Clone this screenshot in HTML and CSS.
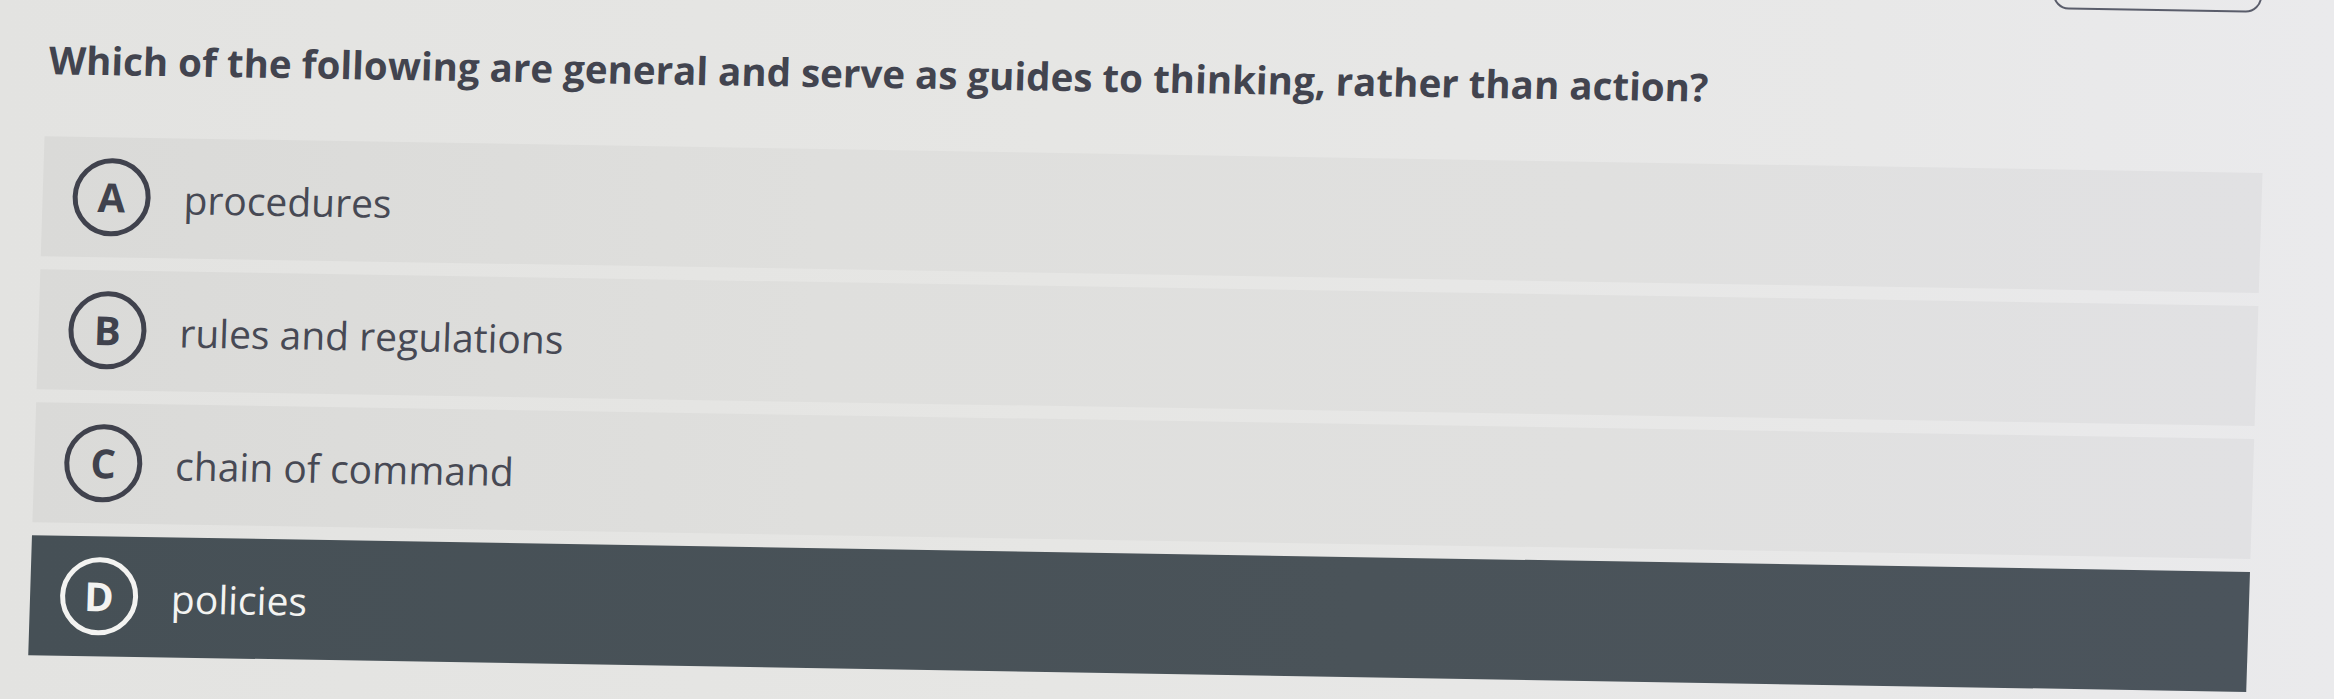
FILE: index.html
```html
<!DOCTYPE html>
<html lang="en">
<head>
<meta charset="utf-8">
<title>Question</title>
<link rel="stylesheet" href="styles.css">
</head>
<body>
<div class="screen">
  <div class="topbar"><div class="top-btn"></div></div>
  <h1 class="question">Which of the following are general and serve as guides to thinking, rather than action?</h1>
  <ul class="options">
    <li class="option"><span class="badge">A</span><span class="label">procedures</span></li>
    <li class="option"><span class="badge">B</span><span class="label">rules and regulations</span></li>
    <li class="option"><span class="badge">C</span><span class="label">chain of command</span></li>
    <li class="option selected"><span class="badge">D</span><span class="label">policies</span></li>
  </ul>
</div>
</body>
</html>
```
FILE: styles.css
```css
html, body {
  margin: 0;
  padding: 0;
  height: 100%;
  overflow: hidden;
}
body {
  background: linear-gradient(90deg, #e3e3e1 0%, #e6e6e4 45%, #e8e8e8 80%, #eaeaec 100%);
}
.screen {
  width: 2334px;
  height: 699px;
  transform-origin: right top;
  transform: skew(-1.8deg, 0.95deg);
  font-family: "Open Sans", "Noto Sans", sans-serif;
  color: #40424d;
}
.topbar {
  height: 14px;
  display: flex;
  justify-content: flex-end;
  align-items: flex-end;
  padding-right: 72px;
}
.top-btn {
  flex: none;
  width: 209px;
  height: 56px;
  box-sizing: border-box;
  border: 2px solid #5a5d6b;
  border-radius: 16px;
}
.question {
  margin: 57px 0 0 52px;
  font-size: 38.5px;
  font-weight: 700;
  line-height: 52px;
  color: #42444f;
}
.options {
  list-style: none;
  margin: 51px 66px 0 50px;
  padding: 0;
  display: flex;
  flex-direction: column;
  gap: 13px;
}
.option {
  height: 120px;
  display: flex;
  align-items: center;
  gap: 33px;
  padding-left: 30px;
  background: linear-gradient(90deg, #dadad8 0%, #dfdfdd 35%, #e0e0df 70%, #e1e1e3 100%);
}
.badge {
  flex: none;
  width: 78px;
  height: 78px;
  box-sizing: border-box;
  border: 5px solid #40424d;
  border-radius: 50%;
  display: flex;
  align-items: center;
  justify-content: center;
  font-size: 40px;
  font-weight: 700;
  line-height: 1;
}
.label {
  font-size: 39px;
  font-weight: 400;
  color: #474954;
}
.option.selected {
  background: linear-gradient(90deg, #465056 0%, #4a5359 60%, #4b545c 100%);
}
.option.selected .badge {
  border-color: #f3f3f1;
  color: #f3f3f1;
}
.option.selected .label {
  color: #f3f3f1;
}
```
